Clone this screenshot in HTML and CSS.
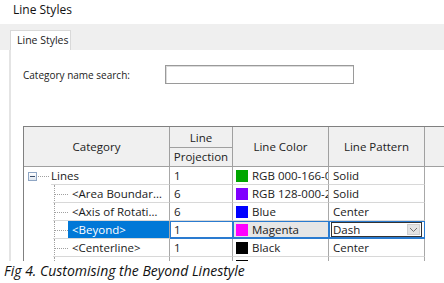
FILE: index.html
```html
<!DOCTYPE html>
<html lang="en">
<head>
  <meta charset="UTF-8" />
  <title>Line Styles</title>
  <link rel="stylesheet" href="styles.css">
</head>
<body>
  <div class="title">Line Styles</div>
  <div class="tabs">
    <div class="tab">Line Styles</div>
  </div>

  <div class="panel">
    <div class="search">
      <label for="catSearch">Category name search:</label>
      <input type="text" id="catSearch" />
    </div>

    <div class="grid">
      <div class="head">
        <div class="h cat-h">Category</div>
        <div class="h proj-h">
          <div class="h-top">Line</div>
          <div class="h-bot">Projection</div>
        </div>
        <div class="h color-h">Line Color</div>
        <div class="h pattern-h">Line Pattern</div>
        <div class="h filler"></div>
      </div>

      <div class="row">
        <div class="gutter"><span class="minus"></span><span class="root-stub"></span></div>
        <div class="cell name root">Lines</div>
        <div class="cell proj">1</div>
        <div class="cell color"><span class="swatch" style="background:#00a600"></span>RGB 000-166-000</div>
        <div class="cell pattern">Solid</div>
        <div class="cell filler"></div>
      </div>

      <div class="row">
        <div class="gutter"></div>
        <div class="cell name child"><span class="label">&lt;Area Boundar…</span></div>
        <div class="cell proj">6</div>
        <div class="cell color"><span class="swatch" style="background:#8000ff"></span>RGB 128-000-255</div>
        <div class="cell pattern">Solid</div>
        <div class="cell filler"></div>
      </div>

      <div class="row">
        <div class="gutter"></div>
        <div class="cell name child"><span class="label">&lt;Axis of Rotati…</span></div>
        <div class="cell proj">6</div>
        <div class="cell color"><span class="swatch" style="background:#0000ff"></span>Blue</div>
        <div class="cell pattern">Center</div>
        <div class="cell filler"></div>
      </div>

      <div class="row sel">
        <div class="gutter"></div>
        <div class="cell name child"><span class="label picked">&lt;Beyond&gt;</span></div>
        <div class="cell proj">1</div>
        <div class="cell color editing"><span class="swatch" style="background:#ff00ff"></span>Magenta</div>
        <div class="cell pattern">
          <div class="combo">
            <span>Dash</span>
            <span class="drop">
              <svg width="9" height="6" viewBox="0 0 9 6"><path d="M1 1 L4.5 4.5 L8 1" fill="none" stroke="#707070" stroke-width="1"/></svg>
            </span>
          </div>
        </div>
        <div class="cell filler"></div>
      </div>

      <div class="row">
        <div class="gutter"></div>
        <div class="cell name child"><span class="label">&lt;Centerline&gt;</span></div>
        <div class="cell proj">1</div>
        <div class="cell color"><span class="swatch" style="background:#000"></span>Black</div>
        <div class="cell pattern">Center</div>
        <div class="cell filler"></div>
      </div>

      <div class="row">
        <div class="gutter"></div>
        <div class="cell name child"><span class="label">&lt;Demolished&gt;</span></div>
        <div class="cell proj">1</div>
        <div class="cell color"><span class="swatch" style="background:#000"></span>Black</div>
        <div class="cell pattern">Demolished</div>
        <div class="cell filler"></div>
      </div>
    </div>
  </div>

  <div class="caption">Fig 4. Customising the Beyond Linestyle</div>
</body>
</html>
```

FILE: styles.css
```css
* {
  box-sizing: border-box;
}

body {
  margin: 0;
  background: white;
  color: #1a1a1a;
  font-family: 'Open Sans', 'Noto Sans', sans-serif;
  width: 444px;
  overflow: hidden;
}

.title {
  height: 24px;
  padding-left: 13px;
  font-size: 12px;
  line-height: 20px;
  color: #111;
}

.tabs {
  height: 26px;
  background: #efefef;
  padding-left: 10px;
  display: flex;
  align-items: flex-end;
}

.tab {
  height: 20px;
  width: 61px;
  background: white;
  border: 1px solid #d9d9d9;
  border-bottom: none;
  font-size: 10.5px;
  line-height: 19px;
  padding-left: 6px;
  color: #222;
}

.panel {
  height: 211px;
  margin-left: 9px;
  border-left: 2px solid #e4e4e4;
  overflow: hidden;
}

.search {
  display: flex;
  align-items: center;
  padding-top: 15px;
  padding-left: 12px;
  height: 34px;
}

.search label {
  width: 142px;
  font-size: 10px;
  color: #222;
}

.search input {
  width: 189px;
  height: 19px;
  border: 1px solid #9a9a9a;
  box-shadow: inset 1px 1px #dcdcdc;
  padding: 0;
  margin: 0;
}

.grid {
  margin-top: 42px;
  margin-left: 12px;
  border-left: 1px solid #808080;
  border-top: 1px solid #808080;
  font-size: 11.5px;
  width: 440px;
}

.head {
  display: flex;
  height: 40px;
  background: #f0f0f0;
  color: #222;
}

.h {
  border-right: 1px solid #a0a0a0;
  border-bottom: 1px solid #a0a0a0;
  display: flex;
  align-items: center;
  justify-content: center;
}

.cat-h {
  width: 146px;
}

.proj-h {
  width: 63px;
  flex-direction: column;
  border-bottom: none;
}

.h-top,
.h-bot {
  width: 100%;
  height: 20px;
  line-height: 19px;
  text-align: center;
  border-bottom: 1px solid #a0a0a0;
}

.h-bot {
  height: 19px;
  line-height: 18px;
}

.color-h,
.pattern-h {
  width: 96px;
}

.head .filler {
  flex: 1;
}

.row {
  display: flex;
  height: 18px;
}

.gutter {
  width: 29px;
  position: relative;
}

.cell {
  height: 18px;
  line-height: 17px;
  border-bottom: 1px solid #d8d8d8;
  border-right: 1px solid #a8a8a8;
  white-space: nowrap;
  overflow: hidden;
}

.name {
  width: 117px;
  position: relative;
}

.root {
  margin-left: -2px;
  width: 119px;
  padding-left: 0;
}

.minus {
  position: absolute;
  left: 4px;
  top: 5px;
  width: 9px;
  height: 9px;
  border: 1px solid #8fa6c4;
  background: linear-gradient(#ffffff, #dfe6ef);
}

.minus::after {
  content: "";
  position: absolute;
  left: 1px;
  top: 3px;
  width: 5px;
  height: 1px;
  background: #3b4f6b;
}

.root-stub {
  position: absolute;
  left: 14px;
  top: 9px;
  width: 11px;
  border-top: 1px dotted #a0a0a0;
}

.child::before {
  content: "";
  position: absolute;
  left: 1px;
  top: 0;
  height: 18px;
  border-left: 1px dotted #a0a0a0;
}

.child::after {
  content: "";
  position: absolute;
  left: 2px;
  top: 9px;
  width: 13px;
  border-top: 1px dotted #a0a0a0;
}

.label {
  display: inline-block;
  margin-left: 15px;
  padding-left: 4px;
  height: 17px;
}

.picked {
  background: #0078d7;
  color: white;
  width: 101px;
}

.proj {
  width: 63px;
  padding-left: 4px;
}

.color {
  width: 96px;
  padding-left: 3px;
  display: flex;
  align-items: center;
}

.swatch {
  width: 12px;
  height: 12px;
  margin-right: 4px;
  flex-shrink: 0;
}

.pattern {
  width: 96px;
  padding-left: 4px;
}

.row .filler {
  flex: 1;
  border-bottom: none;
}

.sel .proj,
.sel .color,
.sel .pattern {
  border-right-color: #2a7bd0;
  box-shadow: inset 0 1px #2a7bd0, inset 0 -1px #2a7bd0, inset 1px 0 #2a7bd0;
  border-bottom-color: #2a7bd0;
}

.sel .color.editing {
  background: #e6e6e6;
}

.sel .pattern {
  padding: 1px 2px 1px 2px;
}

.combo {
  height: 15px;
  border: 1px solid #333;
  background: white;
  display: flex;
  align-items: center;
  justify-content: space-between;
  padding-left: 1px;
  line-height: 13px;
}

.drop {
  width: 13px;
  height: 11px;
  margin-right: 1px;
  background: #e3e3e3;
  border: 1px solid #cfcfcf;
  display: flex;
  align-items: center;
  justify-content: center;
}

.caption {
  height: 22px;
  padding-left: 4px;
  font-style: italic;
  font-size: 14px;
  line-height: 20px;
  color: #111;
}
```
